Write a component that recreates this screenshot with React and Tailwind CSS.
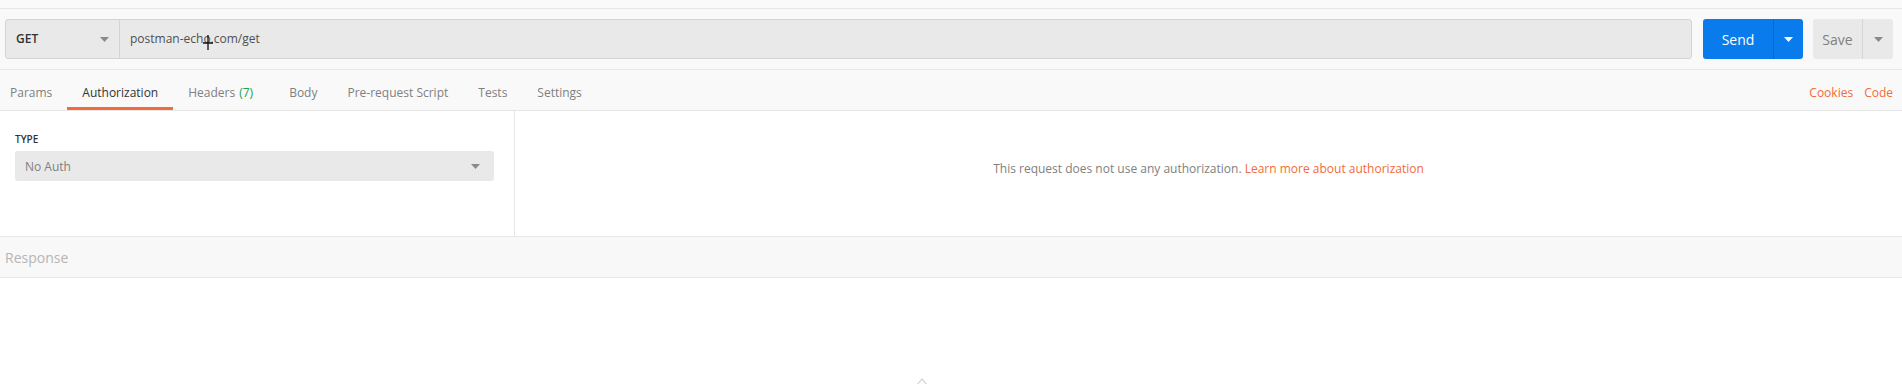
import React from "react";

const Caret = ({ className = "" }) => (
  <svg width="9" height="5" viewBox="0 0 9 5" className={className}>
    <path d="M0 0 L9 0 L4.5 5 Z" fill="currentColor" />
  </svg>
);

const tabs = [
  { label: "Params", cls: "pl-[10px] pr-[15px]" },
  { label: "Authorization", active: true, cls: "px-[15px]" },
  { label: "Headers", count: "(7)", cls: "pl-[15px] pr-[21px]" },
  { label: "Body", cls: "px-[15px]" },
  { label: "Pre-request Script", cls: "px-[15px]" },
  { label: "Tests", cls: "px-[15px]" },
  { label: "Settings", cls: "px-[15px]" },
];

export default function App() {
  return (
    <div
      className="w-[1902px] h-[384px] overflow-hidden bg-white text-[#505050]"
      style={{ fontFamily: '"Open Sans", "Liberation Sans", sans-serif' }}
    >
      {/* top strip */}
      <div className="h-[9px] bg-[#fafafa] border-b border-[#e6e6e6]" />

      {/* URL row */}
      <div className="h-[61px] bg-[#f9f9f9] border-b border-[#e6e6e6] flex items-start pt-[10px] pl-[5px] pr-[9px]">
        <div className="flex flex-1 h-[40px] border border-[#d4d4d4] rounded-[3px] bg-[#e9e9e9]">
          <div className="w-[114px] flex items-center justify-between pl-[10px] pr-[10px] border-r border-[#d4d4d4]">
            <span className="text-[12px] font-semibold text-[#333]">GET</span>
            <Caret className="text-[#8a8a8a]" />
          </div>
          <div className="relative flex-1 flex items-center pl-[10px]">
            <span className="text-[12px] text-[#505050]">postman-echo.com/get</span>
            <svg
              className="absolute left-[82px] top-[15px]"
              width="12"
              height="15"
              viewBox="0 0 12 15"
            >
              <path d="M6 0 V15 M1 8 H11" stroke="#111" strokeWidth="1.3" fill="none" />
            </svg>
          </div>
        </div>
        <div className="ml-[11px] flex h-[40px] w-[100px] rounded-[3px] bg-[#097bed] text-white">
          <div className="w-[70px] flex items-center justify-center text-[14px]">Send</div>
          <div className="flex-1 flex items-center justify-center border-l border-[#0869cc]">
            <Caret className="text-white" />
          </div>
        </div>
        <div className="ml-[10px] flex h-[40px] w-[80px] rounded-[3px] bg-[#e9e9e9] text-[#808080]">
          <div className="w-[49px] flex items-center justify-center text-[14px]">Save</div>
          <div className="flex-1 flex items-center justify-center border-l border-[#d6d6d6]">
            <Caret className="text-[#8a8a8a]" />
          </div>
        </div>
      </div>

      {/* tabs row */}
      <div className="h-[41px] bg-[#f9f9f9] border-b border-[#e6e6e6] flex items-stretch justify-between pr-[9px]">
        <div className="flex items-stretch">
          {tabs.map((t) => (
            <div
              key={t.label}
              className={`${t.cls} flex items-center text-[12px] border-b-[3px] ${
                t.active
                  ? "border-[#f26b3a] text-[#333]"
                  : "border-transparent text-[#808080]"
              }`}
            >
              <span className="pt-[8px]">
                {t.label}
                {t.count && <span className="ml-[4px] text-[#26a244]">{t.count}</span>}
              </span>
            </div>
          ))}
        </div>
        <div className="flex items-center gap-[11px] text-[12px] text-[#f26b3a] pt-[6px]">
          <span>Cookies</span>
          <span>Code</span>
        </div>
      </div>

      {/* auth area */}
      <div className="h-[125px] flex bg-white">
        <div className="w-[515px] border-r border-[#e6e6e6] pl-[15px] pr-[20px] pt-[21px]">
          <div className="text-[10px] font-semibold text-[#333] leading-[14px]">TYPE</div>
          <div className="mt-[5px] h-[30px] w-[479px] rounded-[3px] bg-[#e9e9e9] flex items-center justify-between pl-[10px] pr-[14px]">
            <span className="text-[12px] text-[#808080] pt-[2px]">No Auth</span>
            <Caret className="text-[#8a8a8a]" />
          </div>
        </div>
        <div className="flex-1 flex justify-center pt-[49px]">
          <div className="text-[12px] leading-[18px] text-[#808080]">
            This request does not use any authorization.{" "}
            <span className="text-[#f26b3a]">Learn more about authorization</span>
          </div>
        </div>
      </div>

      {/* response bar */}
      <div className="h-[42px] bg-[#f8f8f8] border-y border-[#e6e6e6] flex items-center pl-[5px]">
        <span className="text-[14px] text-[#b5b5b5]">Response</span>
      </div>

      {/* response body */}
      <div className="pt-[100px] pl-[915px]">
        <svg width="14" height="8" viewBox="0 0 14 8">
          <path d="M1 8 L7 1 L13 8" stroke="#d6d6d6" strokeWidth="1.2" fill="none" />
        </svg>
      </div>
    </div>
  );
}
